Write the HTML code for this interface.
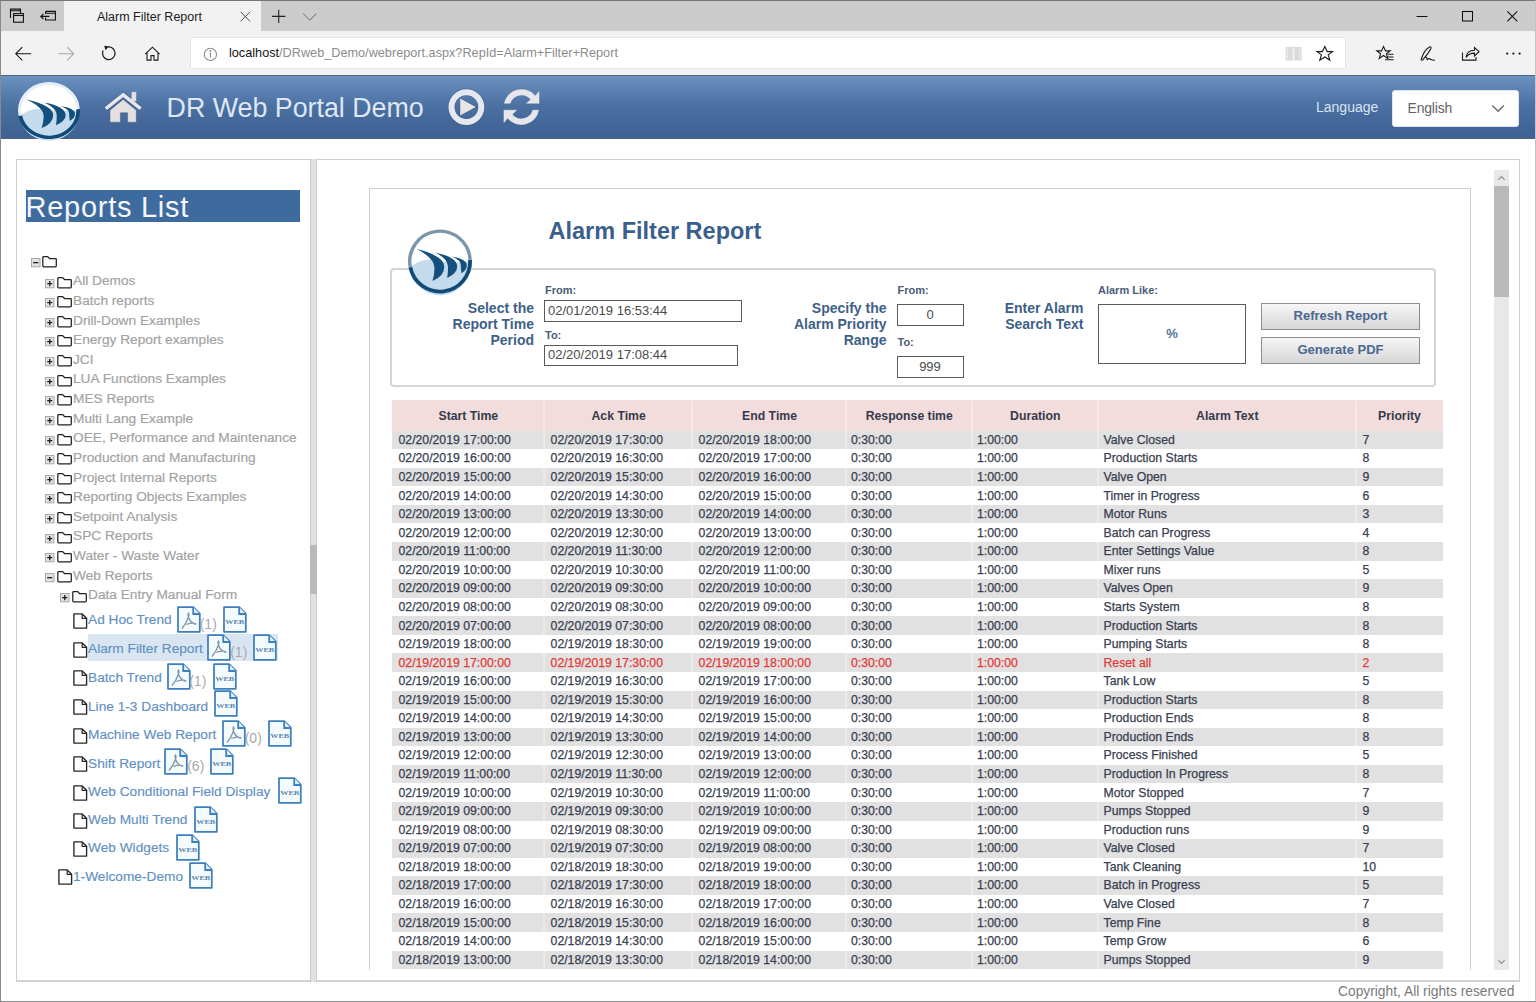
<!DOCTYPE html><html><head><meta charset="utf-8"><title>Alarm Filter Report</title><style>
*{margin:0;padding:0;box-sizing:border-box}
html,body{width:1536px;height:1002px;overflow:hidden;background:#fff;font-family:"Liberation Sans",sans-serif}
.a{position:absolute;white-space:nowrap}
.ico{position:absolute;overflow:visible}
#win{position:absolute;left:0;top:0;width:1536px;height:1002px;border:1px solid #8a8a8a;border-top-color:#777;border-right-color:#c4c4c4}
#tabbar{left:1px;top:1px;width:1534px;height:30px;background:#cccccc}
#tab{left:64px;top:1px;width:197px;height:30px;background:#f2f2f2}
#toolbar{left:1px;top:31px;width:1534px;height:44px;background:#f2f2f2}
#addr{left:190px;top:37px;width:1156px;height:32px;background:#fff;border:1px solid #e4e4e4}
#hdr{left:1px;top:75px;width:1534px;height:64px;background:linear-gradient(#6b91c1 0%,#5c82b3 22%,#4b70a2 48%,#44689a 72%,#3f6294 100%);border-top:1px solid #4d6485;border-bottom:1px solid #4d5e7a}
.tr{font-size:13.7px;color:#a3a3a3;line-height:16px;-webkit-text-stroke-width:0.2px}
.rp{font-size:13.7px;color:#6190c2;line-height:16px;-webkit-text-stroke-width:0.15px}
.cnt{font-size:14px;color:#aaaaaa;line-height:16px}
.lbl{font-size:14px;font-weight:bold;color:#3e5f88;line-height:16.1px;text-align:right;letter-spacing:0}
.fl{font-size:11px;font-weight:bold;color:#4a5d78;line-height:12px}
.inp{position:absolute;border:1.5px solid #5a5a5a;background:#fff;font-size:13px;color:#4a4a4a;line-height:19px;padding-left:3px}
.btn{position:absolute;border:1px solid #8d8d8d;background:linear-gradient(#f7f7f7,#e6e6e6 50%,#d6d6d6);font-size:13px;font-weight:bold;color:#4a6890;text-align:center}
.row{position:absolute;left:392px;width:1051px}
.c{position:absolute;font-size:12.25px;color:#384050;line-height:14px;-webkit-text-stroke-width:0.25px}
.hc{position:absolute;font-size:12.25px;font-weight:bold;color:#343b4c;line-height:14px;text-align:center}
</style></head><body>
<div id="win"></div>
<div class="a" id="tabbar"></div>
<div class="a" id="tab"></div>
<div class="a" id="toolbar"></div>
<div class="a" id="addr"></div>
<!-- tab bar icons -->
<svg class="ico" style="left:0;top:0" width="340" height="31" viewBox="0 0 340 31" fill="none" stroke="#111" stroke-width="1.1">
 <path d="M10.5 18V9.1h10v4.2 M10.5 10.8h10"/>
 <rect x="13.6" y="13.6" width="9.8" height="8.6" fill="#cfcfcf"/>
 <path d="M13.6 15.5h9.8"/>
 <path d="M45.6 11.4h9.8v8.6h-9.8v-2.4 M45.6 11.4v2.6 M45.6 13.2h9.8 M40.8 16.4h8.6 M43.4 13.8l-2.6 2.6 2.6 2.6"/>
 <path d="M240.5 11.8l9.6 9.6 M250.1 11.8l-9.6 9.6" stroke="#444" stroke-width="0.95"/>
 <path d="M272 16.4h13.4 M278.7 9.7v13.4" stroke="#222" stroke-width="1.1"/>
 <path d="M303.2 13.6l6.6 6.6 6.6-6.6" stroke="#666" stroke-width="1"/>
</svg>
<div class="a" style="left:97px;top:8.8px;font-size:12.5px;color:#1c1c1c;line-height:16px;letter-spacing:0">Alarm Filter Report</div>
<!-- window controls -->
<svg class="ico" style="left:1400px;top:0" width="136" height="31" viewBox="1400 0 136 31" fill="none" stroke="#111" stroke-width="1.05">
 <path d="M1416.5 16.5h11"/>
 <rect x="1462.5" y="11.5" width="10" height="9.5"/>
 <path d="M1507.3 11.3l10 10 M1517.3 11.3l-10 10"/>
</svg>
<!-- toolbar nav icons -->
<svg class="ico" style="left:0;top:31px" width="240" height="44" viewBox="0 31 240 44" fill="none" stroke-width="1.1">
 <path d="M15.8 53.8h15.4 M22.3 47.2l-6.5 6.6 6.5 6.6" stroke="#1a1a1a"/>
 <path d="M58.3 53.8h15.4 M67.2 47.2l6.5 6.6-6.5 6.6" stroke="#a8a8a8"/>
 <path d="M107.7 47.1 A6.3 6.3 0 1 1 103.1 50.6" stroke="#1a1a1a" stroke-width="1.25"/>
 <path d="M104.2 45.8 L108.6 46.6 L105.6 50.2Z" fill="#1a1a1a" stroke="none"/>
 <path d="M145.2 54.2l7.2-7 7.2 7 M147 52.5v7.6h4v-4.5h3v4.5h4v-7.6" stroke="#1a1a1a"/>
 <circle cx="210.4" cy="54.4" r="6.1" stroke="#8a8a8a"/>
 <path d="M210.4 52.8v4.6" stroke="#8a8a8a" stroke-width="1.2"/>
 <circle cx="210.4" cy="50.9" r="0.4" fill="#8a8a8a" stroke="#8a8a8a"/>
</svg>
<div class="a" style="left:229px;top:45px;font-size:12.7px;line-height:16px;color:#8c8c8c;white-space:nowrap"><span style="color:#141414">localhost</span>/DRweb_Demo/webreport.aspx?RepId=Alarm+Filter+Report</div>
<!-- right toolbar icons -->
<svg class="ico" style="left:1270px;top:31px" width="266" height="44" viewBox="1270 31 266 44" fill="none" stroke="#1a1a1a" stroke-width="1.1">
 <rect x="1285.6" y="47" width="16" height="13.4" fill="#dadada" stroke="none"/>
 <path d="M1293.6 48v12" stroke="#f4f4f4" stroke-width="1.6"/>
 <path d="M1287.5 49v10 M1299.7 49v10" stroke="#ececec" stroke-width="1"/>
 <path d="M1324.8 46.6l2.35 5h5.4l-4.35 3.3 1.65 5.4-5.05-3.3-5.05 3.3 1.65-5.4-4.35-3.3h5.4z"/>
 <path d="M1383.5 46.6l2 4.3h4.6l-3.7 2.8 1.4 4.7-4.3-2.9-4.3 2.9 1.4-4.7-3.7-2.8h4.6z"/>
 <path d="M1387.5 54.3h6 M1387.5 57h6 M1385 59.8h8.5"/>
 <path d="M1421 60.5c1-4 4-11 8.5-13.5c1.5-0.7 2 0.5 1.2 2c-2 4-5.5 8-8.5 11.5 M1424.8 56.5c1.5 0 2 1.5 2.5 3c1-1 2-1.2 3.2-0.3c1 0.8 2.2 1 4.5 1" />
 <path d="M1462.5 52.5v7.6h13.5v-3 M1466 57.5c0.5-4.5 3.5-7 8.5-7.2v-2.8l4.5 4.2-4.5 4.2v-2.8c-3.5 0-6.5 1.3-8.5 4.4z"/>
 <circle cx="1507.2" cy="53.6" r="1.15" fill="#1a1a1a" stroke="none"/>
 <circle cx="1513.4" cy="53.6" r="1.15" fill="#1a1a1a" stroke="none"/>
 <circle cx="1519.6" cy="53.6" r="1.15" fill="#1a1a1a" stroke="none"/>
</svg>

<div class="a" id="hdr"></div>
<svg class="ico" style="left:15.799999999999997px;top:78.1px" width="66" height="66" viewBox="-33 -33 66 66">
<g transform="scale(0.96875,0.890625)">
<circle cx="0" cy="0" r="30.5" fill="#ffffff"/>
<path d="M-30.5 6 C-24 0 -16 -3 -8 -2 C2 -1 14 2 30.5 -1 A30.5 30.5 0 0 1 -30.5 6Z" fill="#c4daed"/>
<path d="M30.1 -2.1 A30.2 30.2 0 0 1 -29.7 5.2" fill="none" stroke="#0f4a78" stroke-width="3.8"/>
<path d="M-29.7 5.2 A30.2 30.2 0 1 1 30.1 -2.1" fill="none" stroke="#e6eef7" stroke-width="3.4"/>
<path d="M-23.2 -12.9 Q4.3 -6 4.3 4.7 Q4.3 14 -7.6 19.1 Q-5.5 13 -5.5 6 Q-5.5 -4 -23.2 -12.9Z" fill="#14507f"/>
<path d="M-4.8 -9.6 Q17.2 -5 17.2 4.7 Q17.2 11 7.2 16 Q8 12 8 4.7 Q8 -3 -4.8 -9.6Z" fill="#14507f"/>
<path d="M12 -5.6 Q26.8 -3 26.8 3.2 Q26.8 8 21.6 11.2 Q20.8 8 20.8 3.2 Q20.8 -2 12 -5.6Z" fill="#14507f"/>
</g></svg>
<svg class="ico" style="left:100px;top:86px" width="46" height="40" viewBox="100 86 46 40">
<g fill="none" stroke="#34507a" stroke-opacity="0.55" stroke-width="5.4" stroke-linejoin="miter">
<path d="M105.8 108.6 L123.2 94.9 L140.6 108.6"/>
</g>
<path d="M131.3 91.6h5.2v9.8h-5.2z" fill="#e6e0e2" stroke="#34507a" stroke-opacity="0.4" stroke-width="0.8"/>
<path d="M110 110.2 L123.2 99.4 L136.3 110.2 V122.2 H127.6 V112.8 H120.4 V122.2 H110Z" fill="#e4e0e2" stroke="#34507a" stroke-opacity="0.45" stroke-width="0.9"/>
<path d="M105.8 108.6 L123.2 94.9 L140.6 108.6" fill="none" stroke="#e8e6ee" stroke-width="3.7" stroke-linejoin="miter"/>
</svg>
<div class="a" style="left:166.6px;top:92.6px;font-size:26.8px;line-height:30px;color:#dfe6f4">DR Web Portal Demo</div>
<svg class="ico" style="left:444px;top:85px" width="46" height="46" viewBox="444 85 46 46">
<circle cx="466.4" cy="107.1" r="14.9" fill="none" stroke="#2f4f78" stroke-width="7.2" opacity="0.45"/>
<circle cx="466.4" cy="107.1" r="14.9" fill="none" stroke="#e6e8f0" stroke-width="6"/>
<path d="M459.5 97.5 L477 107 L459.5 116.5Z" fill="#2f4f78" opacity="0.5"/>
<path d="M460.2 98.4 L475.8 107 L460.2 115.6Z" fill="#ebe3e6"/>
</svg>
<svg class="ico" style="left:500px;top:85px" width="46" height="46" viewBox="500 85 46 46">
<path d="M503.8 103.75 A18 18 0 0 1 535.3 95.4 L539.5 90.5 L539.5 103.75 L525.5 103.75 L530.3 99.6 A11.5 11.5 0 0 0 510.5 103.75Z" fill="#e6e6ec" stroke="#2f4f78" stroke-opacity="0.35" stroke-width="0.8"/>
<path d="M539.2 109.75 A18 18 0 0 1 507.7 118.6 L503.5 123.5 L503.5 109.75 L517.5 109.75 L512.7 114.4 A11.5 11.5 0 0 0 532.5 109.75Z" fill="#e6e6ec" stroke="#2f4f78" stroke-opacity="0.35" stroke-width="0.8"/>
</svg>
<div class="a" style="left:1316px;top:99px;font-size:14px;line-height:16px;color:#dae3f1">Language</div>
<div class="a" style="left:1392px;top:90px;width:127px;height:36.5px;background:#fff;border-radius:3px;border:1px solid #dfe3ea"></div>
<div class="a" style="left:1407.5px;top:99.5px;font-size:14px;line-height:16px;color:#636363;letter-spacing:-0.2px">English</div>
<svg class="ico" style="left:1488px;top:100px" width="20" height="16" viewBox="1488 100 20 16"><path d="M1492.3 105.5l5.8 5.8 5.8-5.8" fill="none" stroke="#6a6a6a" stroke-width="1.3"/></svg>
<div class="a" style="left:16px;top:159px;width:295px;height:823px;border:1px solid #cfcfcf;border-bottom:2px solid #d2d2d2"></div>
<div class="a" style="left:310px;top:159px;width:7px;height:823px;background:#e1e1e1;border-left:1px solid #c8c8c8;border-right:1px solid #cdcdcd"></div>
<div class="a" style="left:310px;top:545px;width:7px;height:49px;background:#b9b9b9"></div>
<div class="a" style="left:317px;top:159px;width:1203px;height:823px;border:1px solid #cfcfcf;border-left:none;border-bottom:2px solid #d2d2d2"></div>
<div class="a" style="left:26px;top:190px;width:274px;height:32px;background:#3e6b9e"></div>
<div class="a" style="left:25.6px;top:190.4px;font-size:29px;line-height:34px;color:#f5f7fb;letter-spacing:0.72px">Reports List</div>
<svg class="ico" style="left:30.5px;top:258.2px" width="10" height="10" viewBox="0 0 10 10"><rect x="0.5" y="0.5" width="8.5" height="8.3" fill="#e2e2e2" stroke="#a9a9a9" stroke-width="1"/><path d="M2.2 4.65h5.1" stroke="#1e1e1e" stroke-width="1.3"/></svg>
<svg class="ico" style="left:41.5px;top:254.6px" width="16" height="13" viewBox="0 0 16 13"><path d="M0.8 11V2.4q0-0.8 0.8-0.8h4.1l1.8 1.9h6q0.8 0 0.8 0.8v6.7q0 0.8-0.8 0.8H1.6q-0.8 0-0.8-0.8z" fill="#fff" stroke="#202020" stroke-width="1.25" stroke-linejoin="round"/></svg>
<svg class="ico" style="left:45px;top:278.5px" width="10" height="10" viewBox="0 0 10 10"><rect x="0.5" y="0.5" width="8.5" height="8.3" fill="#e2e2e2" stroke="#a9a9a9" stroke-width="1"/><path d="M2.2 4.65h5.1 M4.75 2.1v5.1" stroke="#1e1e1e" stroke-width="1.3"/></svg>
<svg class="ico" style="left:56.5px;top:275.5px" width="16" height="13" viewBox="0 0 16 13"><path d="M0.8 11V2.4q0-0.8 0.8-0.8h4.1l1.8 1.9h6q0.8 0 0.8 0.8v6.7q0 0.8-0.8 0.8H1.6q-0.8 0-0.8-0.8z" fill="#fff" stroke="#202020" stroke-width="1.25" stroke-linejoin="round"/></svg>
<div class="a tr" style="left:73px;top:273.25px">All Demos</div>
<svg class="ico" style="left:45px;top:298.12px" width="10" height="10" viewBox="0 0 10 10"><rect x="0.5" y="0.5" width="8.5" height="8.3" fill="#e2e2e2" stroke="#a9a9a9" stroke-width="1"/><path d="M2.2 4.65h5.1 M4.75 2.1v5.1" stroke="#1e1e1e" stroke-width="1.3"/></svg>
<svg class="ico" style="left:56.5px;top:295.12px" width="16" height="13" viewBox="0 0 16 13"><path d="M0.8 11V2.4q0-0.8 0.8-0.8h4.1l1.8 1.9h6q0.8 0 0.8 0.8v6.7q0 0.8-0.8 0.8H1.6q-0.8 0-0.8-0.8z" fill="#fff" stroke="#202020" stroke-width="1.25" stroke-linejoin="round"/></svg>
<div class="a tr" style="left:73px;top:292.88px">Batch reports</div>
<svg class="ico" style="left:45px;top:317.75px" width="10" height="10" viewBox="0 0 10 10"><rect x="0.5" y="0.5" width="8.5" height="8.3" fill="#e2e2e2" stroke="#a9a9a9" stroke-width="1"/><path d="M2.2 4.65h5.1 M4.75 2.1v5.1" stroke="#1e1e1e" stroke-width="1.3"/></svg>
<svg class="ico" style="left:56.5px;top:314.75px" width="16" height="13" viewBox="0 0 16 13"><path d="M0.8 11V2.4q0-0.8 0.8-0.8h4.1l1.8 1.9h6q0.8 0 0.8 0.8v6.7q0 0.8-0.8 0.8H1.6q-0.8 0-0.8-0.8z" fill="#fff" stroke="#202020" stroke-width="1.25" stroke-linejoin="round"/></svg>
<div class="a tr" style="left:73px;top:312.50px">Drill-Down Examples</div>
<svg class="ico" style="left:45px;top:337.38px" width="10" height="10" viewBox="0 0 10 10"><rect x="0.5" y="0.5" width="8.5" height="8.3" fill="#e2e2e2" stroke="#a9a9a9" stroke-width="1"/><path d="M2.2 4.65h5.1 M4.75 2.1v5.1" stroke="#1e1e1e" stroke-width="1.3"/></svg>
<svg class="ico" style="left:56.5px;top:334.38px" width="16" height="13" viewBox="0 0 16 13"><path d="M0.8 11V2.4q0-0.8 0.8-0.8h4.1l1.8 1.9h6q0.8 0 0.8 0.8v6.7q0 0.8-0.8 0.8H1.6q-0.8 0-0.8-0.8z" fill="#fff" stroke="#202020" stroke-width="1.25" stroke-linejoin="round"/></svg>
<div class="a tr" style="left:73px;top:332.12px">Energy Report examples</div>
<svg class="ico" style="left:45px;top:357.0px" width="10" height="10" viewBox="0 0 10 10"><rect x="0.5" y="0.5" width="8.5" height="8.3" fill="#e2e2e2" stroke="#a9a9a9" stroke-width="1"/><path d="M2.2 4.65h5.1 M4.75 2.1v5.1" stroke="#1e1e1e" stroke-width="1.3"/></svg>
<svg class="ico" style="left:56.5px;top:354.0px" width="16" height="13" viewBox="0 0 16 13"><path d="M0.8 11V2.4q0-0.8 0.8-0.8h4.1l1.8 1.9h6q0.8 0 0.8 0.8v6.7q0 0.8-0.8 0.8H1.6q-0.8 0-0.8-0.8z" fill="#fff" stroke="#202020" stroke-width="1.25" stroke-linejoin="round"/></svg>
<div class="a tr" style="left:73px;top:351.75px">JCI</div>
<svg class="ico" style="left:45px;top:376.62px" width="10" height="10" viewBox="0 0 10 10"><rect x="0.5" y="0.5" width="8.5" height="8.3" fill="#e2e2e2" stroke="#a9a9a9" stroke-width="1"/><path d="M2.2 4.65h5.1 M4.75 2.1v5.1" stroke="#1e1e1e" stroke-width="1.3"/></svg>
<svg class="ico" style="left:56.5px;top:373.62px" width="16" height="13" viewBox="0 0 16 13"><path d="M0.8 11V2.4q0-0.8 0.8-0.8h4.1l1.8 1.9h6q0.8 0 0.8 0.8v6.7q0 0.8-0.8 0.8H1.6q-0.8 0-0.8-0.8z" fill="#fff" stroke="#202020" stroke-width="1.25" stroke-linejoin="round"/></svg>
<div class="a tr" style="left:73px;top:371.38px">LUA Functions Examples</div>
<svg class="ico" style="left:45px;top:396.25px" width="10" height="10" viewBox="0 0 10 10"><rect x="0.5" y="0.5" width="8.5" height="8.3" fill="#e2e2e2" stroke="#a9a9a9" stroke-width="1"/><path d="M2.2 4.65h5.1 M4.75 2.1v5.1" stroke="#1e1e1e" stroke-width="1.3"/></svg>
<svg class="ico" style="left:56.5px;top:393.25px" width="16" height="13" viewBox="0 0 16 13"><path d="M0.8 11V2.4q0-0.8 0.8-0.8h4.1l1.8 1.9h6q0.8 0 0.8 0.8v6.7q0 0.8-0.8 0.8H1.6q-0.8 0-0.8-0.8z" fill="#fff" stroke="#202020" stroke-width="1.25" stroke-linejoin="round"/></svg>
<div class="a tr" style="left:73px;top:391.00px">MES Reports</div>
<svg class="ico" style="left:45px;top:415.88px" width="10" height="10" viewBox="0 0 10 10"><rect x="0.5" y="0.5" width="8.5" height="8.3" fill="#e2e2e2" stroke="#a9a9a9" stroke-width="1"/><path d="M2.2 4.65h5.1 M4.75 2.1v5.1" stroke="#1e1e1e" stroke-width="1.3"/></svg>
<svg class="ico" style="left:56.5px;top:412.88px" width="16" height="13" viewBox="0 0 16 13"><path d="M0.8 11V2.4q0-0.8 0.8-0.8h4.1l1.8 1.9h6q0.8 0 0.8 0.8v6.7q0 0.8-0.8 0.8H1.6q-0.8 0-0.8-0.8z" fill="#fff" stroke="#202020" stroke-width="1.25" stroke-linejoin="round"/></svg>
<div class="a tr" style="left:73px;top:410.62px">Multi Lang Example</div>
<svg class="ico" style="left:45px;top:435.5px" width="10" height="10" viewBox="0 0 10 10"><rect x="0.5" y="0.5" width="8.5" height="8.3" fill="#e2e2e2" stroke="#a9a9a9" stroke-width="1"/><path d="M2.2 4.65h5.1 M4.75 2.1v5.1" stroke="#1e1e1e" stroke-width="1.3"/></svg>
<svg class="ico" style="left:56.5px;top:432.5px" width="16" height="13" viewBox="0 0 16 13"><path d="M0.8 11V2.4q0-0.8 0.8-0.8h4.1l1.8 1.9h6q0.8 0 0.8 0.8v6.7q0 0.8-0.8 0.8H1.6q-0.8 0-0.8-0.8z" fill="#fff" stroke="#202020" stroke-width="1.25" stroke-linejoin="round"/></svg>
<div class="a tr" style="left:73px;top:430.25px">OEE, Performance and Maintenance</div>
<svg class="ico" style="left:45px;top:455.12px" width="10" height="10" viewBox="0 0 10 10"><rect x="0.5" y="0.5" width="8.5" height="8.3" fill="#e2e2e2" stroke="#a9a9a9" stroke-width="1"/><path d="M2.2 4.65h5.1 M4.75 2.1v5.1" stroke="#1e1e1e" stroke-width="1.3"/></svg>
<svg class="ico" style="left:56.5px;top:452.12px" width="16" height="13" viewBox="0 0 16 13"><path d="M0.8 11V2.4q0-0.8 0.8-0.8h4.1l1.8 1.9h6q0.8 0 0.8 0.8v6.7q0 0.8-0.8 0.8H1.6q-0.8 0-0.8-0.8z" fill="#fff" stroke="#202020" stroke-width="1.25" stroke-linejoin="round"/></svg>
<div class="a tr" style="left:73px;top:449.88px">Production and Manufacturing</div>
<svg class="ico" style="left:45px;top:474.75px" width="10" height="10" viewBox="0 0 10 10"><rect x="0.5" y="0.5" width="8.5" height="8.3" fill="#e2e2e2" stroke="#a9a9a9" stroke-width="1"/><path d="M2.2 4.65h5.1 M4.75 2.1v5.1" stroke="#1e1e1e" stroke-width="1.3"/></svg>
<svg class="ico" style="left:56.5px;top:471.75px" width="16" height="13" viewBox="0 0 16 13"><path d="M0.8 11V2.4q0-0.8 0.8-0.8h4.1l1.8 1.9h6q0.8 0 0.8 0.8v6.7q0 0.8-0.8 0.8H1.6q-0.8 0-0.8-0.8z" fill="#fff" stroke="#202020" stroke-width="1.25" stroke-linejoin="round"/></svg>
<div class="a tr" style="left:73px;top:469.50px">Project Internal Reports</div>
<svg class="ico" style="left:45px;top:494.38px" width="10" height="10" viewBox="0 0 10 10"><rect x="0.5" y="0.5" width="8.5" height="8.3" fill="#e2e2e2" stroke="#a9a9a9" stroke-width="1"/><path d="M2.2 4.65h5.1 M4.75 2.1v5.1" stroke="#1e1e1e" stroke-width="1.3"/></svg>
<svg class="ico" style="left:56.5px;top:491.38px" width="16" height="13" viewBox="0 0 16 13"><path d="M0.8 11V2.4q0-0.8 0.8-0.8h4.1l1.8 1.9h6q0.8 0 0.8 0.8v6.7q0 0.8-0.8 0.8H1.6q-0.8 0-0.8-0.8z" fill="#fff" stroke="#202020" stroke-width="1.25" stroke-linejoin="round"/></svg>
<div class="a tr" style="left:73px;top:489.12px">Reporting Objects Examples</div>
<svg class="ico" style="left:45px;top:514.0px" width="10" height="10" viewBox="0 0 10 10"><rect x="0.5" y="0.5" width="8.5" height="8.3" fill="#e2e2e2" stroke="#a9a9a9" stroke-width="1"/><path d="M2.2 4.65h5.1 M4.75 2.1v5.1" stroke="#1e1e1e" stroke-width="1.3"/></svg>
<svg class="ico" style="left:56.5px;top:511.0px" width="16" height="13" viewBox="0 0 16 13"><path d="M0.8 11V2.4q0-0.8 0.8-0.8h4.1l1.8 1.9h6q0.8 0 0.8 0.8v6.7q0 0.8-0.8 0.8H1.6q-0.8 0-0.8-0.8z" fill="#fff" stroke="#202020" stroke-width="1.25" stroke-linejoin="round"/></svg>
<div class="a tr" style="left:73px;top:508.75px">Setpoint Analysis</div>
<svg class="ico" style="left:45px;top:533.62px" width="10" height="10" viewBox="0 0 10 10"><rect x="0.5" y="0.5" width="8.5" height="8.3" fill="#e2e2e2" stroke="#a9a9a9" stroke-width="1"/><path d="M2.2 4.65h5.1 M4.75 2.1v5.1" stroke="#1e1e1e" stroke-width="1.3"/></svg>
<svg class="ico" style="left:56.5px;top:530.62px" width="16" height="13" viewBox="0 0 16 13"><path d="M0.8 11V2.4q0-0.8 0.8-0.8h4.1l1.8 1.9h6q0.8 0 0.8 0.8v6.7q0 0.8-0.8 0.8H1.6q-0.8 0-0.8-0.8z" fill="#fff" stroke="#202020" stroke-width="1.25" stroke-linejoin="round"/></svg>
<div class="a tr" style="left:73px;top:528.38px">SPC Reports</div>
<svg class="ico" style="left:45px;top:553.25px" width="10" height="10" viewBox="0 0 10 10"><rect x="0.5" y="0.5" width="8.5" height="8.3" fill="#e2e2e2" stroke="#a9a9a9" stroke-width="1"/><path d="M2.2 4.65h5.1 M4.75 2.1v5.1" stroke="#1e1e1e" stroke-width="1.3"/></svg>
<svg class="ico" style="left:56.5px;top:550.25px" width="16" height="13" viewBox="0 0 16 13"><path d="M0.8 11V2.4q0-0.8 0.8-0.8h4.1l1.8 1.9h6q0.8 0 0.8 0.8v6.7q0 0.8-0.8 0.8H1.6q-0.8 0-0.8-0.8z" fill="#fff" stroke="#202020" stroke-width="1.25" stroke-linejoin="round"/></svg>
<div class="a tr" style="left:73px;top:548.00px">Water - Waste Water</div>
<svg class="ico" style="left:45px;top:572.88px" width="10" height="10" viewBox="0 0 10 10"><rect x="0.5" y="0.5" width="8.5" height="8.3" fill="#e2e2e2" stroke="#a9a9a9" stroke-width="1"/><path d="M2.2 4.65h5.1" stroke="#1e1e1e" stroke-width="1.3"/></svg>
<svg class="ico" style="left:56.5px;top:569.88px" width="16" height="13" viewBox="0 0 16 13"><path d="M0.8 11V2.4q0-0.8 0.8-0.8h4.1l1.8 1.9h6q0.8 0 0.8 0.8v6.7q0 0.8-0.8 0.8H1.6q-0.8 0-0.8-0.8z" fill="#fff" stroke="#202020" stroke-width="1.25" stroke-linejoin="round"/></svg>
<div class="a tr" style="left:73px;top:567.62px">Web Reports</div>
<svg class="ico" style="left:60px;top:592.5px" width="10" height="10" viewBox="0 0 10 10"><rect x="0.5" y="0.5" width="8.5" height="8.3" fill="#e2e2e2" stroke="#a9a9a9" stroke-width="1"/><path d="M2.2 4.65h5.1 M4.75 2.1v5.1" stroke="#1e1e1e" stroke-width="1.3"/></svg>
<svg class="ico" style="left:71.5px;top:589.5px" width="16" height="13" viewBox="0 0 16 13"><path d="M0.8 11V2.4q0-0.8 0.8-0.8h4.1l1.8 1.9h6q0.8 0 0.8 0.8v6.7q0 0.8-0.8 0.8H1.6q-0.8 0-0.8-0.8z" fill="#fff" stroke="#202020" stroke-width="1.25" stroke-linejoin="round"/></svg>
<div class="a tr" style="left:88px;top:587.25px">Data Entry Manual Form</div>
<div class="a" style="left:88px;top:634px;width:190px;height:27.3px;background:#d9e6f2"></div>
<svg class="ico" style="left:73px;top:612.75px" width="15" height="16" viewBox="0 0 15 16"><path d="M0.9 15.1V0.9h8.3l4.4 4.4v9.8z" fill="#fff" stroke="#262626" stroke-width="1.35" stroke-linejoin="round"/><path d="M9.2 0.9v4.4h4.4" fill="none" stroke="#262626" stroke-width="1.2"/></svg>
<div class="a rp" style="left:88px;top:612.30px">Ad Hoc Trend</div>
<svg class="ico" style="left:176.6px;top:605.5px" width="24" height="27" viewBox="0 0 24 27"><path d="M1 25.8V1h15.2L22.8 7.5V25.8z" fill="#f4fbff" stroke="#3d7fbe" stroke-width="1.75" stroke-linejoin="round"/><path d="M16.2 1v7h6.6" fill="#dff2fb" stroke="#3d80c0" stroke-width="1.8"/><path d="M5 22.5c2.5-3 5-7 6.5-11.5c0.6-2 0.6-3.5 0-4c-0.8 1-0.5 3 0.5 5.5c1 2.5 3 4.5 5.5 5.5c1.2 0.4 1.8 0 0.8-0.5c-2-0.6-5.5-0.3-9 1" fill="none" stroke="#7c95a8" stroke-width="1.3"/></svg>
<div class="a cnt" style="left:199.7px;top:615.70px">(1)</div>
<svg class="ico" style="left:223px;top:605.5px" width="24" height="27" viewBox="0 0 24 27"><path d="M1 25.8V1h15.2L22.8 7.5V25.8z" fill="#f4fbff" stroke="#3d7fbe" stroke-width="1.75" stroke-linejoin="round"/><path d="M16.2 1v7h6.6" fill="#dff2fb" stroke="#3d80c0" stroke-width="1.8"/><text x="11.8" y="18.2" text-anchor="middle" font-family="Liberation Serif" font-weight="bold" font-size="6.8" fill="#5a86ad" textLength="19" lengthAdjust="spacingAndGlyphs">WEB</text></svg>
<svg class="ico" style="left:73px;top:641.8px" width="15" height="16" viewBox="0 0 15 16"><path d="M0.9 15.1V0.9h8.3l4.4 4.4v9.8z" fill="#fff" stroke="#262626" stroke-width="1.35" stroke-linejoin="round"/><path d="M9.2 0.9v4.4h4.4" fill="none" stroke="#262626" stroke-width="1.2"/></svg>
<div class="a rp" style="left:88px;top:641.35px">Alarm Filter Report</div>
<svg class="ico" style="left:207px;top:634px" width="24" height="27" viewBox="0 0 24 27"><path d="M1 25.8V1h15.2L22.8 7.5V25.8z" fill="#f4fbff" stroke="#3d7fbe" stroke-width="1.75" stroke-linejoin="round"/><path d="M16.2 1v7h6.6" fill="#dff2fb" stroke="#3d80c0" stroke-width="1.8"/><path d="M5 22.5c2.5-3 5-7 6.5-11.5c0.6-2 0.6-3.5 0-4c-0.8 1-0.5 3 0.5 5.5c1 2.5 3 4.5 5.5 5.5c1.2 0.4 1.8 0 0.8-0.5c-2-0.6-5.5-0.3-9 1" fill="none" stroke="#7c95a8" stroke-width="1.3"/></svg>
<div class="a cnt" style="left:230.2px;top:644.20px">(1)</div>
<svg class="ico" style="left:252.8px;top:634px" width="24" height="27" viewBox="0 0 24 27"><path d="M1 25.8V1h15.2L22.8 7.5V25.8z" fill="#f4fbff" stroke="#3d7fbe" stroke-width="1.75" stroke-linejoin="round"/><path d="M16.2 1v7h6.6" fill="#dff2fb" stroke="#3d80c0" stroke-width="1.8"/><text x="11.8" y="18.2" text-anchor="middle" font-family="Liberation Serif" font-weight="bold" font-size="6.8" fill="#5a86ad" textLength="19" lengthAdjust="spacingAndGlyphs">WEB</text></svg>
<svg class="ico" style="left:73px;top:670px" width="15" height="16" viewBox="0 0 15 16"><path d="M0.9 15.1V0.9h8.3l4.4 4.4v9.8z" fill="#fff" stroke="#262626" stroke-width="1.35" stroke-linejoin="round"/><path d="M9.2 0.9v4.4h4.4" fill="none" stroke="#262626" stroke-width="1.2"/></svg>
<div class="a rp" style="left:88px;top:669.55px">Batch Trend</div>
<svg class="ico" style="left:166.7px;top:662.5px" width="24" height="27" viewBox="0 0 24 27"><path d="M1 25.8V1h15.2L22.8 7.5V25.8z" fill="#f4fbff" stroke="#3d7fbe" stroke-width="1.75" stroke-linejoin="round"/><path d="M16.2 1v7h6.6" fill="#dff2fb" stroke="#3d80c0" stroke-width="1.8"/><path d="M5 22.5c2.5-3 5-7 6.5-11.5c0.6-2 0.6-3.5 0-4c-0.8 1-0.5 3 0.5 5.5c1 2.5 3 4.5 5.5 5.5c1.2 0.4 1.8 0 0.8-0.5c-2-0.6-5.5-0.3-9 1" fill="none" stroke="#7c95a8" stroke-width="1.3"/></svg>
<div class="a cnt" style="left:189.2px;top:672.70px">(1)</div>
<svg class="ico" style="left:212.5px;top:662.5px" width="24" height="27" viewBox="0 0 24 27"><path d="M1 25.8V1h15.2L22.8 7.5V25.8z" fill="#f4fbff" stroke="#3d7fbe" stroke-width="1.75" stroke-linejoin="round"/><path d="M16.2 1v7h6.6" fill="#dff2fb" stroke="#3d80c0" stroke-width="1.8"/><text x="11.8" y="18.2" text-anchor="middle" font-family="Liberation Serif" font-weight="bold" font-size="6.8" fill="#5a86ad" textLength="19" lengthAdjust="spacingAndGlyphs">WEB</text></svg>
<svg class="ico" style="left:73px;top:699px" width="15" height="16" viewBox="0 0 15 16"><path d="M0.9 15.1V0.9h8.3l4.4 4.4v9.8z" fill="#fff" stroke="#262626" stroke-width="1.35" stroke-linejoin="round"/><path d="M9.2 0.9v4.4h4.4" fill="none" stroke="#262626" stroke-width="1.2"/></svg>
<div class="a rp" style="left:88px;top:698.55px">Line 1-3 Dashboard</div>
<svg class="ico" style="left:214.4px;top:690px" width="24" height="27" viewBox="0 0 24 27"><path d="M1 25.8V1h15.2L22.8 7.5V25.8z" fill="#f4fbff" stroke="#3d7fbe" stroke-width="1.75" stroke-linejoin="round"/><path d="M16.2 1v7h6.6" fill="#dff2fb" stroke="#3d80c0" stroke-width="1.8"/><text x="11.8" y="18.2" text-anchor="middle" font-family="Liberation Serif" font-weight="bold" font-size="6.8" fill="#5a86ad" textLength="19" lengthAdjust="spacingAndGlyphs">WEB</text></svg>
<svg class="ico" style="left:73px;top:727.6px" width="15" height="16" viewBox="0 0 15 16"><path d="M0.9 15.1V0.9h8.3l4.4 4.4v9.8z" fill="#fff" stroke="#262626" stroke-width="1.35" stroke-linejoin="round"/><path d="M9.2 0.9v4.4h4.4" fill="none" stroke="#262626" stroke-width="1.2"/></svg>
<div class="a rp" style="left:88px;top:727.15px">Machine Web Report</div>
<svg class="ico" style="left:221.6px;top:720px" width="24" height="27" viewBox="0 0 24 27"><path d="M1 25.8V1h15.2L22.8 7.5V25.8z" fill="#f4fbff" stroke="#3d7fbe" stroke-width="1.75" stroke-linejoin="round"/><path d="M16.2 1v7h6.6" fill="#dff2fb" stroke="#3d80c0" stroke-width="1.8"/><path d="M5 22.5c2.5-3 5-7 6.5-11.5c0.6-2 0.6-3.5 0-4c-0.8 1-0.5 3 0.5 5.5c1 2.5 3 4.5 5.5 5.5c1.2 0.4 1.8 0 0.8-0.5c-2-0.6-5.5-0.3-9 1" fill="none" stroke="#7c95a8" stroke-width="1.3"/></svg>
<div class="a cnt" style="left:244.7px;top:730.20px">(0)</div>
<svg class="ico" style="left:267.6px;top:720px" width="24" height="27" viewBox="0 0 24 27"><path d="M1 25.8V1h15.2L22.8 7.5V25.8z" fill="#f4fbff" stroke="#3d7fbe" stroke-width="1.75" stroke-linejoin="round"/><path d="M16.2 1v7h6.6" fill="#dff2fb" stroke="#3d80c0" stroke-width="1.8"/><text x="11.8" y="18.2" text-anchor="middle" font-family="Liberation Serif" font-weight="bold" font-size="6.8" fill="#5a86ad" textLength="19" lengthAdjust="spacingAndGlyphs">WEB</text></svg>
<svg class="ico" style="left:73px;top:756px" width="15" height="16" viewBox="0 0 15 16"><path d="M0.9 15.1V0.9h8.3l4.4 4.4v9.8z" fill="#fff" stroke="#262626" stroke-width="1.35" stroke-linejoin="round"/><path d="M9.2 0.9v4.4h4.4" fill="none" stroke="#262626" stroke-width="1.2"/></svg>
<div class="a rp" style="left:88px;top:755.55px">Shift Report</div>
<svg class="ico" style="left:164.4px;top:748px" width="24" height="27" viewBox="0 0 24 27"><path d="M1 25.8V1h15.2L22.8 7.5V25.8z" fill="#f4fbff" stroke="#3d7fbe" stroke-width="1.75" stroke-linejoin="round"/><path d="M16.2 1v7h6.6" fill="#dff2fb" stroke="#3d80c0" stroke-width="1.8"/><path d="M5 22.5c2.5-3 5-7 6.5-11.5c0.6-2 0.6-3.5 0-4c-0.8 1-0.5 3 0.5 5.5c1 2.5 3 4.5 5.5 5.5c1.2 0.4 1.8 0 0.8-0.5c-2-0.6-5.5-0.3-9 1" fill="none" stroke="#7c95a8" stroke-width="1.3"/></svg>
<div class="a cnt" style="left:187.2px;top:758.20px">(6)</div>
<svg class="ico" style="left:210.3px;top:748px" width="24" height="27" viewBox="0 0 24 27"><path d="M1 25.8V1h15.2L22.8 7.5V25.8z" fill="#f4fbff" stroke="#3d7fbe" stroke-width="1.75" stroke-linejoin="round"/><path d="M16.2 1v7h6.6" fill="#dff2fb" stroke="#3d80c0" stroke-width="1.8"/><text x="11.8" y="18.2" text-anchor="middle" font-family="Liberation Serif" font-weight="bold" font-size="6.8" fill="#5a86ad" textLength="19" lengthAdjust="spacingAndGlyphs">WEB</text></svg>
<svg class="ico" style="left:73px;top:784.6px" width="15" height="16" viewBox="0 0 15 16"><path d="M0.9 15.1V0.9h8.3l4.4 4.4v9.8z" fill="#fff" stroke="#262626" stroke-width="1.35" stroke-linejoin="round"/><path d="M9.2 0.9v4.4h4.4" fill="none" stroke="#262626" stroke-width="1.2"/></svg>
<div class="a rp" style="left:88px;top:784.15px">Web Conditional Field Display</div>
<svg class="ico" style="left:277.6px;top:777px" width="24" height="27" viewBox="0 0 24 27"><path d="M1 25.8V1h15.2L22.8 7.5V25.8z" fill="#f4fbff" stroke="#3d7fbe" stroke-width="1.75" stroke-linejoin="round"/><path d="M16.2 1v7h6.6" fill="#dff2fb" stroke="#3d80c0" stroke-width="1.8"/><text x="11.8" y="18.2" text-anchor="middle" font-family="Liberation Serif" font-weight="bold" font-size="6.8" fill="#5a86ad" textLength="19" lengthAdjust="spacingAndGlyphs">WEB</text></svg>
<svg class="ico" style="left:73px;top:812.6px" width="15" height="16" viewBox="0 0 15 16"><path d="M0.9 15.1V0.9h8.3l4.4 4.4v9.8z" fill="#fff" stroke="#262626" stroke-width="1.35" stroke-linejoin="round"/><path d="M9.2 0.9v4.4h4.4" fill="none" stroke="#262626" stroke-width="1.2"/></svg>
<div class="a rp" style="left:88px;top:812.15px">Web Multi Trend</div>
<svg class="ico" style="left:194.4px;top:805.6px" width="24" height="27" viewBox="0 0 24 27"><path d="M1 25.8V1h15.2L22.8 7.5V25.8z" fill="#f4fbff" stroke="#3d7fbe" stroke-width="1.75" stroke-linejoin="round"/><path d="M16.2 1v7h6.6" fill="#dff2fb" stroke="#3d80c0" stroke-width="1.8"/><text x="11.8" y="18.2" text-anchor="middle" font-family="Liberation Serif" font-weight="bold" font-size="6.8" fill="#5a86ad" textLength="19" lengthAdjust="spacingAndGlyphs">WEB</text></svg>
<svg class="ico" style="left:73px;top:840.6px" width="15" height="16" viewBox="0 0 15 16"><path d="M0.9 15.1V0.9h8.3l4.4 4.4v9.8z" fill="#fff" stroke="#262626" stroke-width="1.35" stroke-linejoin="round"/><path d="M9.2 0.9v4.4h4.4" fill="none" stroke="#262626" stroke-width="1.2"/></svg>
<div class="a rp" style="left:88px;top:840.15px">Web Widgets</div>
<svg class="ico" style="left:175.6px;top:833.6px" width="24" height="27" viewBox="0 0 24 27"><path d="M1 25.8V1h15.2L22.8 7.5V25.8z" fill="#f4fbff" stroke="#3d7fbe" stroke-width="1.75" stroke-linejoin="round"/><path d="M16.2 1v7h6.6" fill="#dff2fb" stroke="#3d80c0" stroke-width="1.8"/><text x="11.8" y="18.2" text-anchor="middle" font-family="Liberation Serif" font-weight="bold" font-size="6.8" fill="#5a86ad" textLength="19" lengthAdjust="spacingAndGlyphs">WEB</text></svg>
<svg class="ico" style="left:58px;top:869px" width="15" height="16" viewBox="0 0 15 16"><path d="M0.9 15.1V0.9h8.3l4.4 4.4v9.8z" fill="#fff" stroke="#262626" stroke-width="1.35" stroke-linejoin="round"/><path d="M9.2 0.9v4.4h4.4" fill="none" stroke="#262626" stroke-width="1.2"/></svg>
<div class="a rp" style="left:73px;top:868.55px">1-Welcome-Demo</div>
<svg class="ico" style="left:189.4px;top:861.6px" width="24" height="27" viewBox="0 0 24 27"><path d="M1 25.8V1h15.2L22.8 7.5V25.8z" fill="#f4fbff" stroke="#3d7fbe" stroke-width="1.75" stroke-linejoin="round"/><path d="M16.2 1v7h6.6" fill="#dff2fb" stroke="#3d80c0" stroke-width="1.8"/><text x="11.8" y="18.2" text-anchor="middle" font-family="Liberation Serif" font-weight="bold" font-size="6.8" fill="#5a86ad" textLength="19" lengthAdjust="spacingAndGlyphs">WEB</text></svg>
<div class="a" style="left:1494px;top:170px;width:15px;height:800px;background:#e8e8e8"></div>
<div class="a" style="left:1494px;top:186px;width:15px;height:111px;background:#b9b9b9"></div>
<svg class="ico" style="left:1494px;top:170px" width="15" height="16" viewBox="0 0 15 16"><path d="M4.3 9.8l3.2-3.2 3.2 3.2" fill="none" stroke="#8d8d8d" stroke-width="1.1"/></svg>
<svg class="ico" style="left:1494px;top:954px" width="15" height="16" viewBox="0 0 15 16"><path d="M4.3 6.2l3.2 3.2 3.2-3.2" fill="none" stroke="#8d8d8d" stroke-width="1.1"/></svg>
<div class="a" style="left:369px;top:188px;width:102px;height:782px;border-left:1px solid #cfcfcf"></div>
<div class="a" style="left:369px;top:188px;width:1102px;height:782px;border:1px solid #d0d0d0;border-bottom:none"></div>
<div class="a" style="left:548.5px;top:218.2px;font-size:23.5px;font-weight:bold;line-height:27px;color:#3a5f8e">Alarm Filter Report</div>
<div class="a" style="left:390px;top:268px;width:1046px;height:118.5px;border:2.5px solid #d5d5d5;border-radius:4px;background:#fff"></div>
<svg class="ico" style="left:406px;top:228px" width="68" height="68" viewBox="-34 -34 68 68">
<g transform="scale(1.0,1.0)">
<circle cx="0" cy="0" r="30.5" fill="#ffffff"/>
<path d="M-30.5 6 C-24 0 -16 -3 -8 -2 C2 -1 14 2 30.5 -1 A30.5 30.5 0 0 1 -30.5 6Z" fill="#c4daed"/>
<path d="M30.1 -2.1 A30.2 30.2 0 0 1 -29.7 5.2" fill="none" stroke="#0f4a78" stroke-width="3.8"/>
<path d="M-29.7 5.2 A30.2 30.2 0 1 1 30.1 -2.1" fill="none" stroke="#7b96ab" stroke-width="3.4"/>
<path d="M-23.2 -12.9 Q4.3 -6 4.3 4.7 Q4.3 14 -7.6 19.1 Q-5.5 13 -5.5 6 Q-5.5 -4 -23.2 -12.9Z" fill="#14507f"/>
<path d="M-4.8 -9.6 Q17.2 -5 17.2 4.7 Q17.2 11 7.2 16 Q8 12 8 4.7 Q8 -3 -4.8 -9.6Z" fill="#14507f"/>
<path d="M12 -5.6 Q26.8 -3 26.8 3.2 Q26.8 8 21.6 11.2 Q20.8 8 20.8 3.2 Q20.8 -2 12 -5.6Z" fill="#14507f"/>
</g></svg>
<div class="a lbl" style="left:380px;width:154px;top:300px;white-space:normal">Select the<br>Report Time<br>Period</div>
<div class="a lbl" style="left:760px;width:126.5px;top:300px;white-space:normal">Specify the<br>Alarm Priority<br>Range</div>
<div class="a lbl" style="left:960px;width:123.5px;top:300px;white-space:normal">Enter Alarm<br>Search Text</div>
<div class="a fl" style="left:545px;top:284px">From:</div>
<div class="a fl" style="left:545px;top:329px">To:</div>
<div class="inp" style="left:544px;top:299.5px;width:198px;height:22.5px">02/01/2019 16:53:44</div>
<div class="inp" style="left:544px;top:345px;width:194px;height:21px;line-height:18px">02/20/2019 17:08:44</div>
<div class="a fl" style="left:897.5px;top:284px">From:</div>
<div class="a fl" style="left:897.5px;top:336px">To:</div>
<div class="inp" style="left:896.5px;top:303.5px;width:67px;height:22px;text-align:center;padding:0">0</div>
<div class="inp" style="left:896.5px;top:355.5px;width:67px;height:22px;text-align:center;padding:0">999</div>
<div class="a fl" style="left:1098px;top:284px">Alarm Like:</div>
<div class="inp" style="left:1098px;top:304px;width:148px;height:59.5px;text-align:center;padding:0;line-height:57px;font-weight:normal;-webkit-text-stroke-width:0.35px;color:#4e6e98">%</div>
<div class="btn" style="left:1261px;top:303.4px;width:159px;height:26.4px;line-height:24.4px">Refresh Report</div>
<div class="btn" style="left:1261px;top:337.2px;width:159px;height:26.4px;line-height:24.4px">Generate PDF</div>
<div class="a" style="left:392px;top:400px;width:1051px;height:30.8px;background:#f2dcdc"></div>
<div class="hc" style="left:392.3px;width:152.1px;top:409px">Start Time</div>
<div class="hc" style="left:544.4px;width:148.5px;top:409px">Ack Time</div>
<div class="hc" style="left:692.9px;width:153.3px;top:409px">End Time</div>
<div class="hc" style="left:846.2px;width:126.1px;top:409px">Response time</div>
<div class="hc" style="left:972.3px;width:126.0px;top:409px">Duration</div>
<div class="hc" style="left:1098.3px;width:258.0px;top:409px">Alarm Text</div>
<div class="hc" style="left:1356.3px;width:86.4px;top:409px">Priority</div>
<div class="a" style="left:392px;top:430.60px;width:1051px;height:18.57px;background:#e1e1e1"></div>
<div class="c" style="left:398.5px;top:432.80px;">02/20/2019 17:00:00</div>
<div class="c" style="left:550.6px;top:432.80px;">02/20/2019 17:30:00</div>
<div class="c" style="left:698.6px;top:432.80px;">02/20/2019 18:00:00</div>
<div class="c" style="left:851px;top:432.80px;">0:30:00</div>
<div class="c" style="left:977px;top:432.80px;">1:00:00</div>
<div class="c" style="left:1103.5px;top:432.80px;">Valve Closed</div>
<div class="c" style="left:1362.5px;top:432.80px;">7</div>
<div class="c" style="left:398.5px;top:451.37px;">02/20/2019 16:00:00</div>
<div class="c" style="left:550.6px;top:451.37px;">02/20/2019 16:30:00</div>
<div class="c" style="left:698.6px;top:451.37px;">02/20/2019 17:00:00</div>
<div class="c" style="left:851px;top:451.37px;">0:30:00</div>
<div class="c" style="left:977px;top:451.37px;">1:00:00</div>
<div class="c" style="left:1103.5px;top:451.37px;">Production Starts</div>
<div class="c" style="left:1362.5px;top:451.37px;">8</div>
<div class="a" style="left:392px;top:467.74px;width:1051px;height:18.57px;background:#e1e1e1"></div>
<div class="c" style="left:398.5px;top:469.94px;">02/20/2019 15:00:00</div>
<div class="c" style="left:550.6px;top:469.94px;">02/20/2019 15:30:00</div>
<div class="c" style="left:698.6px;top:469.94px;">02/20/2019 16:00:00</div>
<div class="c" style="left:851px;top:469.94px;">0:30:00</div>
<div class="c" style="left:977px;top:469.94px;">1:00:00</div>
<div class="c" style="left:1103.5px;top:469.94px;">Valve Open</div>
<div class="c" style="left:1362.5px;top:469.94px;">9</div>
<div class="c" style="left:398.5px;top:488.51px;">02/20/2019 14:00:00</div>
<div class="c" style="left:550.6px;top:488.51px;">02/20/2019 14:30:00</div>
<div class="c" style="left:698.6px;top:488.51px;">02/20/2019 15:00:00</div>
<div class="c" style="left:851px;top:488.51px;">0:30:00</div>
<div class="c" style="left:977px;top:488.51px;">1:00:00</div>
<div class="c" style="left:1103.5px;top:488.51px;">Timer in Progress</div>
<div class="c" style="left:1362.5px;top:488.51px;">6</div>
<div class="a" style="left:392px;top:504.88px;width:1051px;height:18.57px;background:#e1e1e1"></div>
<div class="c" style="left:398.5px;top:507.08px;">02/20/2019 13:00:00</div>
<div class="c" style="left:550.6px;top:507.08px;">02/20/2019 13:30:00</div>
<div class="c" style="left:698.6px;top:507.08px;">02/20/2019 14:00:00</div>
<div class="c" style="left:851px;top:507.08px;">0:30:00</div>
<div class="c" style="left:977px;top:507.08px;">1:00:00</div>
<div class="c" style="left:1103.5px;top:507.08px;">Motor Runs</div>
<div class="c" style="left:1362.5px;top:507.08px;">3</div>
<div class="c" style="left:398.5px;top:525.65px;">02/20/2019 12:00:00</div>
<div class="c" style="left:550.6px;top:525.65px;">02/20/2019 12:30:00</div>
<div class="c" style="left:698.6px;top:525.65px;">02/20/2019 13:00:00</div>
<div class="c" style="left:851px;top:525.65px;">0:30:00</div>
<div class="c" style="left:977px;top:525.65px;">1:00:00</div>
<div class="c" style="left:1103.5px;top:525.65px;">Batch can Progress</div>
<div class="c" style="left:1362.5px;top:525.65px;">4</div>
<div class="a" style="left:392px;top:542.02px;width:1051px;height:18.57px;background:#e1e1e1"></div>
<div class="c" style="left:398.5px;top:544.22px;">02/20/2019 11:00:00</div>
<div class="c" style="left:550.6px;top:544.22px;">02/20/2019 11:30:00</div>
<div class="c" style="left:698.6px;top:544.22px;">02/20/2019 12:00:00</div>
<div class="c" style="left:851px;top:544.22px;">0:30:00</div>
<div class="c" style="left:977px;top:544.22px;">1:00:00</div>
<div class="c" style="left:1103.5px;top:544.22px;">Enter Settings Value</div>
<div class="c" style="left:1362.5px;top:544.22px;">8</div>
<div class="c" style="left:398.5px;top:562.79px;">02/20/2019 10:00:00</div>
<div class="c" style="left:550.6px;top:562.79px;">02/20/2019 10:30:00</div>
<div class="c" style="left:698.6px;top:562.79px;">02/20/2019 11:00:00</div>
<div class="c" style="left:851px;top:562.79px;">0:30:00</div>
<div class="c" style="left:977px;top:562.79px;">1:00:00</div>
<div class="c" style="left:1103.5px;top:562.79px;">Mixer runs</div>
<div class="c" style="left:1362.5px;top:562.79px;">5</div>
<div class="a" style="left:392px;top:579.16px;width:1051px;height:18.57px;background:#e1e1e1"></div>
<div class="c" style="left:398.5px;top:581.36px;">02/20/2019 09:00:00</div>
<div class="c" style="left:550.6px;top:581.36px;">02/20/2019 09:30:00</div>
<div class="c" style="left:698.6px;top:581.36px;">02/20/2019 10:00:00</div>
<div class="c" style="left:851px;top:581.36px;">0:30:00</div>
<div class="c" style="left:977px;top:581.36px;">1:00:00</div>
<div class="c" style="left:1103.5px;top:581.36px;">Valves Open</div>
<div class="c" style="left:1362.5px;top:581.36px;">9</div>
<div class="c" style="left:398.5px;top:599.93px;">02/20/2019 08:00:00</div>
<div class="c" style="left:550.6px;top:599.93px;">02/20/2019 08:30:00</div>
<div class="c" style="left:698.6px;top:599.93px;">02/20/2019 09:00:00</div>
<div class="c" style="left:851px;top:599.93px;">0:30:00</div>
<div class="c" style="left:977px;top:599.93px;">1:00:00</div>
<div class="c" style="left:1103.5px;top:599.93px;">Starts System</div>
<div class="c" style="left:1362.5px;top:599.93px;">8</div>
<div class="a" style="left:392px;top:616.30px;width:1051px;height:18.57px;background:#e1e1e1"></div>
<div class="c" style="left:398.5px;top:618.50px;">02/20/2019 07:00:00</div>
<div class="c" style="left:550.6px;top:618.50px;">02/20/2019 07:30:00</div>
<div class="c" style="left:698.6px;top:618.50px;">02/20/2019 08:00:00</div>
<div class="c" style="left:851px;top:618.50px;">0:30:00</div>
<div class="c" style="left:977px;top:618.50px;">1:00:00</div>
<div class="c" style="left:1103.5px;top:618.50px;">Production Starts</div>
<div class="c" style="left:1362.5px;top:618.50px;">8</div>
<div class="c" style="left:398.5px;top:637.07px;">02/19/2019 18:00:00</div>
<div class="c" style="left:550.6px;top:637.07px;">02/19/2019 18:30:00</div>
<div class="c" style="left:698.6px;top:637.07px;">02/19/2019 19:00:00</div>
<div class="c" style="left:851px;top:637.07px;">0:30:00</div>
<div class="c" style="left:977px;top:637.07px;">1:00:00</div>
<div class="c" style="left:1103.5px;top:637.07px;">Pumping Starts</div>
<div class="c" style="left:1362.5px;top:637.07px;">8</div>
<div class="a" style="left:392px;top:653.44px;width:1051px;height:18.57px;background:#e1e1e1"></div>
<div class="c" style="left:398.5px;top:655.64px;color:#e23b36;">02/19/2019 17:00:00</div>
<div class="c" style="left:550.6px;top:655.64px;color:#e23b36;">02/19/2019 17:30:00</div>
<div class="c" style="left:698.6px;top:655.64px;color:#e23b36;">02/19/2019 18:00:00</div>
<div class="c" style="left:851px;top:655.64px;color:#e23b36;">0:30:00</div>
<div class="c" style="left:977px;top:655.64px;color:#e23b36;">1:00:00</div>
<div class="c" style="left:1103.5px;top:655.64px;color:#e23b36;">Reset all</div>
<div class="c" style="left:1362.5px;top:655.64px;color:#e23b36;">2</div>
<div class="c" style="left:398.5px;top:674.21px;">02/19/2019 16:00:00</div>
<div class="c" style="left:550.6px;top:674.21px;">02/19/2019 16:30:00</div>
<div class="c" style="left:698.6px;top:674.21px;">02/19/2019 17:00:00</div>
<div class="c" style="left:851px;top:674.21px;">0:30:00</div>
<div class="c" style="left:977px;top:674.21px;">1:00:00</div>
<div class="c" style="left:1103.5px;top:674.21px;">Tank Low</div>
<div class="c" style="left:1362.5px;top:674.21px;">5</div>
<div class="a" style="left:392px;top:690.58px;width:1051px;height:18.57px;background:#e1e1e1"></div>
<div class="c" style="left:398.5px;top:692.78px;">02/19/2019 15:00:00</div>
<div class="c" style="left:550.6px;top:692.78px;">02/19/2019 15:30:00</div>
<div class="c" style="left:698.6px;top:692.78px;">02/19/2019 16:00:00</div>
<div class="c" style="left:851px;top:692.78px;">0:30:00</div>
<div class="c" style="left:977px;top:692.78px;">1:00:00</div>
<div class="c" style="left:1103.5px;top:692.78px;">Production Starts</div>
<div class="c" style="left:1362.5px;top:692.78px;">8</div>
<div class="c" style="left:398.5px;top:711.35px;">02/19/2019 14:00:00</div>
<div class="c" style="left:550.6px;top:711.35px;">02/19/2019 14:30:00</div>
<div class="c" style="left:698.6px;top:711.35px;">02/19/2019 15:00:00</div>
<div class="c" style="left:851px;top:711.35px;">0:30:00</div>
<div class="c" style="left:977px;top:711.35px;">1:00:00</div>
<div class="c" style="left:1103.5px;top:711.35px;">Production Ends</div>
<div class="c" style="left:1362.5px;top:711.35px;">8</div>
<div class="a" style="left:392px;top:727.72px;width:1051px;height:18.57px;background:#e1e1e1"></div>
<div class="c" style="left:398.5px;top:729.92px;">02/19/2019 13:00:00</div>
<div class="c" style="left:550.6px;top:729.92px;">02/19/2019 13:30:00</div>
<div class="c" style="left:698.6px;top:729.92px;">02/19/2019 14:00:00</div>
<div class="c" style="left:851px;top:729.92px;">0:30:00</div>
<div class="c" style="left:977px;top:729.92px;">1:00:00</div>
<div class="c" style="left:1103.5px;top:729.92px;">Production Ends</div>
<div class="c" style="left:1362.5px;top:729.92px;">8</div>
<div class="c" style="left:398.5px;top:748.49px;">02/19/2019 12:00:00</div>
<div class="c" style="left:550.6px;top:748.49px;">02/19/2019 12:30:00</div>
<div class="c" style="left:698.6px;top:748.49px;">02/19/2019 13:00:00</div>
<div class="c" style="left:851px;top:748.49px;">0:30:00</div>
<div class="c" style="left:977px;top:748.49px;">1:00:00</div>
<div class="c" style="left:1103.5px;top:748.49px;">Process Finished</div>
<div class="c" style="left:1362.5px;top:748.49px;">5</div>
<div class="a" style="left:392px;top:764.86px;width:1051px;height:18.57px;background:#e1e1e1"></div>
<div class="c" style="left:398.5px;top:767.06px;">02/19/2019 11:00:00</div>
<div class="c" style="left:550.6px;top:767.06px;">02/19/2019 11:30:00</div>
<div class="c" style="left:698.6px;top:767.06px;">02/19/2019 12:00:00</div>
<div class="c" style="left:851px;top:767.06px;">0:30:00</div>
<div class="c" style="left:977px;top:767.06px;">1:00:00</div>
<div class="c" style="left:1103.5px;top:767.06px;">Production In Progress</div>
<div class="c" style="left:1362.5px;top:767.06px;">8</div>
<div class="c" style="left:398.5px;top:785.63px;">02/19/2019 10:00:00</div>
<div class="c" style="left:550.6px;top:785.63px;">02/19/2019 10:30:00</div>
<div class="c" style="left:698.6px;top:785.63px;">02/19/2019 11:00:00</div>
<div class="c" style="left:851px;top:785.63px;">0:30:00</div>
<div class="c" style="left:977px;top:785.63px;">1:00:00</div>
<div class="c" style="left:1103.5px;top:785.63px;">Motor Stopped</div>
<div class="c" style="left:1362.5px;top:785.63px;">7</div>
<div class="a" style="left:392px;top:802.00px;width:1051px;height:18.57px;background:#e1e1e1"></div>
<div class="c" style="left:398.5px;top:804.20px;">02/19/2019 09:00:00</div>
<div class="c" style="left:550.6px;top:804.20px;">02/19/2019 09:30:00</div>
<div class="c" style="left:698.6px;top:804.20px;">02/19/2019 10:00:00</div>
<div class="c" style="left:851px;top:804.20px;">0:30:00</div>
<div class="c" style="left:977px;top:804.20px;">1:00:00</div>
<div class="c" style="left:1103.5px;top:804.20px;">Pumps Stopped</div>
<div class="c" style="left:1362.5px;top:804.20px;">9</div>
<div class="c" style="left:398.5px;top:822.77px;">02/19/2019 08:00:00</div>
<div class="c" style="left:550.6px;top:822.77px;">02/19/2019 08:30:00</div>
<div class="c" style="left:698.6px;top:822.77px;">02/19/2019 09:00:00</div>
<div class="c" style="left:851px;top:822.77px;">0:30:00</div>
<div class="c" style="left:977px;top:822.77px;">1:00:00</div>
<div class="c" style="left:1103.5px;top:822.77px;">Production runs</div>
<div class="c" style="left:1362.5px;top:822.77px;">9</div>
<div class="a" style="left:392px;top:839.14px;width:1051px;height:18.57px;background:#e1e1e1"></div>
<div class="c" style="left:398.5px;top:841.34px;">02/19/2019 07:00:00</div>
<div class="c" style="left:550.6px;top:841.34px;">02/19/2019 07:30:00</div>
<div class="c" style="left:698.6px;top:841.34px;">02/19/2019 08:00:00</div>
<div class="c" style="left:851px;top:841.34px;">0:30:00</div>
<div class="c" style="left:977px;top:841.34px;">1:00:00</div>
<div class="c" style="left:1103.5px;top:841.34px;">Valve Closed</div>
<div class="c" style="left:1362.5px;top:841.34px;">7</div>
<div class="c" style="left:398.5px;top:859.91px;">02/18/2019 18:00:00</div>
<div class="c" style="left:550.6px;top:859.91px;">02/18/2019 18:30:00</div>
<div class="c" style="left:698.6px;top:859.91px;">02/18/2019 19:00:00</div>
<div class="c" style="left:851px;top:859.91px;">0:30:00</div>
<div class="c" style="left:977px;top:859.91px;">1:00:00</div>
<div class="c" style="left:1103.5px;top:859.91px;">Tank Cleaning</div>
<div class="c" style="left:1362.5px;top:859.91px;">10</div>
<div class="a" style="left:392px;top:876.28px;width:1051px;height:18.57px;background:#e1e1e1"></div>
<div class="c" style="left:398.5px;top:878.48px;">02/18/2019 17:00:00</div>
<div class="c" style="left:550.6px;top:878.48px;">02/18/2019 17:30:00</div>
<div class="c" style="left:698.6px;top:878.48px;">02/18/2019 18:00:00</div>
<div class="c" style="left:851px;top:878.48px;">0:30:00</div>
<div class="c" style="left:977px;top:878.48px;">1:00:00</div>
<div class="c" style="left:1103.5px;top:878.48px;">Batch in Progress</div>
<div class="c" style="left:1362.5px;top:878.48px;">5</div>
<div class="c" style="left:398.5px;top:897.05px;">02/18/2019 16:00:00</div>
<div class="c" style="left:550.6px;top:897.05px;">02/18/2019 16:30:00</div>
<div class="c" style="left:698.6px;top:897.05px;">02/18/2019 17:00:00</div>
<div class="c" style="left:851px;top:897.05px;">0:30:00</div>
<div class="c" style="left:977px;top:897.05px;">1:00:00</div>
<div class="c" style="left:1103.5px;top:897.05px;">Valve Closed</div>
<div class="c" style="left:1362.5px;top:897.05px;">7</div>
<div class="a" style="left:392px;top:913.42px;width:1051px;height:18.57px;background:#e1e1e1"></div>
<div class="c" style="left:398.5px;top:915.62px;">02/18/2019 15:00:00</div>
<div class="c" style="left:550.6px;top:915.62px;">02/18/2019 15:30:00</div>
<div class="c" style="left:698.6px;top:915.62px;">02/18/2019 16:00:00</div>
<div class="c" style="left:851px;top:915.62px;">0:30:00</div>
<div class="c" style="left:977px;top:915.62px;">1:00:00</div>
<div class="c" style="left:1103.5px;top:915.62px;">Temp Fine</div>
<div class="c" style="left:1362.5px;top:915.62px;">8</div>
<div class="c" style="left:398.5px;top:934.19px;">02/18/2019 14:00:00</div>
<div class="c" style="left:550.6px;top:934.19px;">02/18/2019 14:30:00</div>
<div class="c" style="left:698.6px;top:934.19px;">02/18/2019 15:00:00</div>
<div class="c" style="left:851px;top:934.19px;">0:30:00</div>
<div class="c" style="left:977px;top:934.19px;">1:00:00</div>
<div class="c" style="left:1103.5px;top:934.19px;">Temp Grow</div>
<div class="c" style="left:1362.5px;top:934.19px;">6</div>
<div class="a" style="left:392px;top:950.56px;width:1051px;height:18.57px;background:#e1e1e1"></div>
<div class="c" style="left:398.5px;top:952.76px;">02/18/2019 13:00:00</div>
<div class="c" style="left:550.6px;top:952.76px;">02/18/2019 13:30:00</div>
<div class="c" style="left:698.6px;top:952.76px;">02/18/2019 14:00:00</div>
<div class="c" style="left:851px;top:952.76px;">0:30:00</div>
<div class="c" style="left:977px;top:952.76px;">1:00:00</div>
<div class="c" style="left:1103.5px;top:952.76px;">Pumps Stopped</div>
<div class="c" style="left:1362.5px;top:952.76px;">9</div>
<div class="a" style="left:542.9px;top:400.5px;width:2px;height:568.5px;background:rgba(255,255,255,0.35)"></div>
<div class="a" style="left:691.4px;top:400.5px;width:2px;height:568.5px;background:rgba(255,255,255,0.35)"></div>
<div class="a" style="left:844.7px;top:400.5px;width:2px;height:568.5px;background:rgba(255,255,255,0.35)"></div>
<div class="a" style="left:970.8px;top:400.5px;width:2px;height:568.5px;background:rgba(255,255,255,0.35)"></div>
<div class="a" style="left:1096.8px;top:400.5px;width:2px;height:568.5px;background:rgba(255,255,255,0.35)"></div>
<div class="a" style="left:1354.8px;top:400.5px;width:2px;height:568.5px;background:rgba(255,255,255,0.35)"></div>
<div class="a" style="left:1338px;top:984.1px;font-size:13.8px;line-height:16px;color:#7a7a7a">Copyright, All rights reserved</div>
</body></html>
